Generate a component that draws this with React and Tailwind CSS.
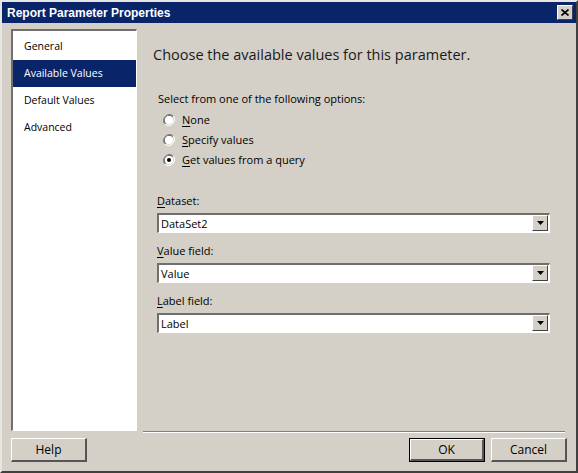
const FONT = { fontFamily: "'Open Sans', 'Noto Sans', sans-serif" };

const navItems = ["General", "Available Values", "Default Values", "Advanced"];

function Radio({ checked }) {
  return (
    <svg width="12" height="12" viewBox="0 0 12 12" className="shrink-0">
      <path d="M10.2 1.8 A6 6 0 0 0 1.8 10.2" fill="none" stroke="#808080" strokeWidth="1" />
      <path d="M9.5 2.5 A5 5 0 0 0 2.5 9.5" fill="none" stroke="#404040" strokeWidth="1" />
      <path d="M1.8 10.2 A6 6 0 0 0 10.2 1.8" fill="none" stroke="#ffffff" strokeWidth="1" />
      <circle cx="6" cy="6" r="4.3" fill="#ffffff" />
      {checked && <circle cx="6" cy="6" r="2" fill="#000000" />}
    </svg>
  );
}

function Option({ label, hot, checked }) {
  return (
    <div className="flex items-center gap-[7px] h-[20px] pl-[5px]">
      <Radio checked={checked} />
      <span>
        <span className="underline underline-offset-2">{hot}</span>
        {label.slice(1)}
      </span>
    </div>
  );
}

function Combo({ label, hot, value }) {
  return (
    <div className="flex flex-col">
      <div className="h-[17px] leading-[17px]">
        <span className="underline underline-offset-2">{hot}</span>
        {label.slice(1)}
      </div>
      <div className="mt-[4px] w-[393px] h-[20px] bg-white border-t-2 border-l-2 border-t-[#6f6f6f] border-l-[#6f6f6f] border-r border-b border-r-white border-b-white flex items-stretch">
        <div className="flex-1 pl-[2px] leading-[17px] text-[11px]">{value}</div>
        <div className="w-[16px] bg-[#d4d0c8] border-t border-l border-t-white border-l-white border-r border-b border-r-[#404040] border-b-[#404040] flex items-center justify-center mr-[1px] mb-[1px]">
          <svg width="7" height="4" viewBox="0 0 7 4">
            <path d="M0 0h7L3.5 4z" fill="#000" />
          </svg>
        </div>
      </div>
    </div>
  );
}

function Button({ children, isDefault }) {
  const face = (
    <div className="w-full h-full flex items-center justify-center bg-[#d4d0c8] border-t border-l border-t-white border-l-white border-r-2 border-b-2 border-r-[#555] border-b-[#555]">
      {children}
    </div>
  );
  return (
    <button
      className={
        "w-[76px] h-[24px] text-[12px] text-black " + (isDefault ? "border border-black" : "")
      }
      style={FONT}
    >
      {face}
    </button>
  );
}

export default function App() {
  return (
    <div
      className="w-[578px] h-[473px] bg-[#d4d0c8] flex flex-col border-t-2 border-l-2 border-t-[#e8e6e2] border-l-[#e8e6e2] border-r-2 border-b-2 border-r-[#404040] border-b-[#404040] text-[11px] text-black"
      style={FONT}
    >
      {/* title bar */}
      <div className="h-[22px] bg-[#0a246a] flex items-center justify-between pl-[5px] pr-[3px]">
        <span
          className="text-white font-bold text-[12px]"
          style={{ fontFamily: "'Liberation Sans', Arial, sans-serif" }}
        >
          Report Parameter Properties
        </span>
        <div className="w-[16px] h-[15px] bg-[#d4d0c8] border-t border-l border-t-white border-l-white border-r border-b border-r-[#404040] border-b-[#404040] flex items-center justify-center">
          <svg width="8" height="7" viewBox="0 0 8 7">
            <path d="M0.5 0.5 L7.5 6.5 M7.5 0.5 L0.5 6.5" stroke="#000" strokeWidth="1.6" />
          </svg>
        </div>
      </div>

      <div className="flex-1 flex flex-col px-[9px]">
        <div className="flex flex-1 pt-[6px]">
          {/* page list */}
          <div className="w-[126px] h-[402px] bg-white border-t-2 border-l-2 border-t-[#6f6f6f] border-l-[#6f6f6f] border-r border-b border-r-white border-b-white pt-[2px]">
            {navItems.map((item) => (
              <div
                key={item}
                className={
                  "h-[27px] leading-[27px] pl-[11px] text-[10.5px] " +
                  (item === "Available Values" ? "bg-[#0a246a] text-white" : "text-black")
                }
              >
                {item}
              </div>
            ))}
          </div>

          {/* page content */}
          <div className="flex-1 flex flex-col pl-[16px]">
            <div className="text-[14.5px] leading-[22px] mt-[15px] text-[#1a1a1a]">
              Choose the available values for this parameter.
            </div>
            <div className="pl-[5px] mt-[24px] flex flex-col">
              <div className="leading-[17px]">Select from one of the following options:</div>
              <div className="mt-[3px] flex flex-col">
                <Option label="None" hot="N" />
                <Option label="Specify values" hot="S" />
                <Option label="Get values from a query" hot="G" checked />
              </div>
              <div className="mt-[22px] flex flex-col gap-[9px] -ml-[1px]">
                <Combo label="Dataset:" hot="D" value="DataSet2" />
                <Combo label="Value field:" hot="V" value="Value" />
                <Combo label="Label field:" hot="L" value="Label" />
              </div>
            </div>
          </div>
        </div>

        {/* footer */}
        <div className="flex flex-col">
          <div className="ml-[132px] mr-[2px] border-t border-t-[#808080] border-b border-b-white" />
          <div className="flex items-center justify-between pt-[5px] pb-[9px]">
            <Button>Help</Button>
            <div className="flex gap-[6px]">
              <Button isDefault>OK</Button>
              <Button>Cancel</Button>
            </div>
          </div>
        </div>
      </div>
    </div>
  );
}
